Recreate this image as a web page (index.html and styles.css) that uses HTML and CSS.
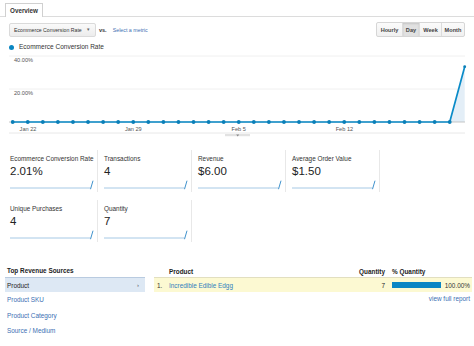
FILE: index.html
```html
<!DOCTYPE html>
<html>
<head>
<meta charset="utf-8">
<link rel="stylesheet" href="styles.css">
</head>
<body>
<div class="page">
  <div class="tabbar"><div class="tab">Overview</div></div>

  <div class="toolbar">
    <div class="select">Ecommerce Conversion Rate<span class="caret">▾</span></div>
    <span class="vs">vs.</span>
    <span class="link metric">Select a metric</span>
    <div class="spacer"></div>
    <div class="btngroup">
      <span class="btn w-hourly">Hourly</span>
      <span class="btn w-day on">Day</span>
      <span class="btn w-week">Week</span>
      <span class="btn w-month">Month</span>
    </div>
  </div>

  <div class="legend"><span class="dot"></span>Ecommerce Conversion Rate</div>

  <svg class="chart" width="474" height="88" viewBox="0 52 474 88">
    <line x1="9" y1="56" x2="465" y2="56" stroke="#ececec" stroke-width="0.8"/>
    <line x1="9" y1="89" x2="465" y2="89" stroke="#ececec" stroke-width="0.8"/>
    <line x1="9" y1="133" x2="465" y2="133" stroke="#e2e2e2" stroke-width="0.8"/>
    <text class="ylab" x="14" y="62.3">40.00%</text>
    <text class="ylab" x="14" y="95.3">20.00%</text>
    <polygon points="449.73,122 464.7,66.7 464.7,122" fill="#e3eef7"/>
    <line x1="9" y1="122" x2="465" y2="122" stroke="#b8b8b8" stroke-width="0.8"/>
    <polyline points="12.7,122 449.73,122 464.7,66.7" fill="none" stroke="#0a8bc8" stroke-width="1.7" stroke-linejoin="round"/>
    <g fill="#0a7fb8">
      <circle cx="12.7" cy="122" r="1.9"/><circle cx="27.77" cy="122" r="1.9"/><circle cx="42.84" cy="122" r="1.9"/>
      <circle cx="57.91" cy="122" r="1.9"/><circle cx="72.98" cy="122" r="1.9"/><circle cx="88.05" cy="122" r="1.9"/>
      <circle cx="103.12" cy="122" r="1.9"/><circle cx="118.19" cy="122" r="1.9"/><circle cx="133.26" cy="122" r="1.9"/>
      <circle cx="148.33" cy="122" r="1.9"/><circle cx="163.4" cy="122" r="1.9"/><circle cx="178.47" cy="122" r="1.9"/>
      <circle cx="193.54" cy="122" r="1.9"/><circle cx="208.61" cy="122" r="1.9"/><circle cx="223.68" cy="122" r="1.9"/>
      <circle cx="238.75" cy="122" r="1.9"/><circle cx="253.82" cy="122" r="1.9"/><circle cx="268.89" cy="122" r="1.9"/>
      <circle cx="283.96" cy="122" r="1.9"/><circle cx="299.03" cy="122" r="1.9"/><circle cx="314.1" cy="122" r="1.9"/>
      <circle cx="329.17" cy="122" r="1.9"/><circle cx="344.24" cy="122" r="1.9"/><circle cx="359.31" cy="122" r="1.9"/>
      <circle cx="374.38" cy="122" r="1.9"/><circle cx="389.45" cy="122" r="1.9"/><circle cx="404.52" cy="122" r="1.9"/>
      <circle cx="419.59" cy="122" r="1.9"/><circle cx="434.66" cy="122" r="1.9"/><circle cx="449.73" cy="122" r="1.9"/>
      <circle cx="464.7" cy="66.7" r="1.4"/>
    </g>
    <text class="xlab" x="28" y="130.5">Jan 22</text>
    <text class="xlab" x="133.3" y="130.5">Jan 29</text>
    <text class="xlab" x="238.7" y="130.5">Feb 5</text>
    <text class="xlab" x="344.4" y="130.5">Feb 12</text>
    <rect x="225" y="134" width="25" height="2.2" fill="#e2e2e2"/>
    <path d="M236.2 134.6 L239.2 134.6 L237.7 136.6 Z" fill="#8a8a8a"/>
  </svg>

  <div class="cards">
    <div class="card">
      <div class="clabel">Ecommerce Conversion Rate</div>
      <div class="cvalue">2.01%</div>
      <svg class="spark" width="84" height="12" viewBox="0 0 84 12"><path d="M0 8 H80.5" stroke="#9cc3e2" stroke-width="0.9" fill="none"/><path d="M80.5 9.2 L83 0.7" stroke="#2b86c6" stroke-width="0.9" fill="none"/></svg>
    </div>
    <div class="card">
      <div class="clabel">Transactions</div>
      <div class="cvalue">4</div>
      <svg class="spark" width="84" height="12" viewBox="0 0 84 12"><path d="M0 8 H80.5" stroke="#9cc3e2" stroke-width="0.9" fill="none"/><path d="M80.5 9.2 L83 0.7" stroke="#2b86c6" stroke-width="0.9" fill="none"/></svg>
    </div>
    <div class="card">
      <div class="clabel">Revenue</div>
      <div class="cvalue">$6.00</div>
      <svg class="spark" width="84" height="12" viewBox="0 0 84 12"><path d="M0 8 H80.5" stroke="#9cc3e2" stroke-width="0.9" fill="none"/><path d="M80.5 9.2 L83 0.7" stroke="#2b86c6" stroke-width="0.9" fill="none"/></svg>
    </div>
    <div class="card">
      <div class="clabel">Average Order Value</div>
      <div class="cvalue">$1.50</div>
      <svg class="spark" width="84" height="12" viewBox="0 0 84 12"><path d="M0 8 H80.5" stroke="#9cc3e2" stroke-width="0.9" fill="none"/><path d="M80.5 9.2 L83 0.7" stroke="#2b86c6" stroke-width="0.9" fill="none"/></svg>
    </div>
    <div class="card">
      <div class="clabel">Unique Purchases</div>
      <div class="cvalue">4</div>
      <svg class="spark" width="84" height="12" viewBox="0 0 84 12"><path d="M0 8 H80.5" stroke="#9cc3e2" stroke-width="0.9" fill="none"/><path d="M80.5 9.2 L83 0.7" stroke="#2b86c6" stroke-width="0.9" fill="none"/></svg>
    </div>
    <div class="card">
      <div class="clabel">Quantity</div>
      <div class="cvalue">7</div>
      <svg class="spark" width="84" height="12" viewBox="0 0 84 12"><path d="M0 8 H80.5" stroke="#9cc3e2" stroke-width="0.9" fill="none"/><path d="M80.5 9.2 L83 0.7" stroke="#2b86c6" stroke-width="0.9" fill="none"/></svg>
    </div>
  </div>

  <div class="bottom">
    <div class="sources">
      <div class="shead">Top Revenue Sources</div>
      <div class="srow active"><span>Product</span><span class="arrow">›</span></div>
      <div class="srow"><span class="link">Product SKU</span></div>
      <div class="srow"><span class="link">Product Category</span></div>
      <div class="srow"><span class="link">Source / Medium</span></div>
    </div>
    <div class="table">
      <div class="trow thead">
        <span></span>
        <span>Product</span>
        <span class="num">Quantity</span>
        <span></span>
        <span class="pqh">% Quantity</span>
      </div>
      <div class="trow tbody">
        <span class="idx">1.</span>
        <span class="plink">Incredible Edible Edgg</span>
        <span class="num">7</span>
        <span></span>
        <span class="bar"><span class="fill"></span></span>
        <span class="pct">100.00%</span>
      </div>
      <div class="full"><span class="link">view full report</span></div>
    </div>
  </div>
</div>
</body>
</html>
```

FILE: styles.css
```css
* { box-sizing: border-box; }
html, body { margin: 0; padding: 0; background: #fff; }
body {
  font-family: "Liberation Sans", Arial, Helvetica, sans-serif;
  color: #222;
  width: 474px;
  height: 346px;
  overflow: hidden;
}
.page { width: 474px; }

.link { color: #3b6fb3; }

/* tabs */
.tabbar {
  height: 17px;
  border-bottom: 1px solid #dcdcdc;
  display: flex;
  align-items: flex-end;
  padding-left: 5px;
}
.tab {
  height: 14px;
  margin-bottom: -1px;
  padding: 0 4px;
  border: 1px solid #d0d0d0;
  border-bottom: none;
  background: #fff;
  font-weight: bold;
  font-size: 6.3px;
  line-height: 13px;
  color: #333;
}

/* toolbar */
.toolbar {
  display: flex;
  align-items: center;
  padding: 5px 9px 0 9px;
  height: 20px;
}
.select {
  width: 87px;
  height: 14px;
  border: 1px solid #dadada;
  border-radius: 2px;
  background: linear-gradient(#fafafa, #ececec);
  font-size: 5.2px;
  line-height: 12px;
  padding-left: 4px;
  color: #333;
  display: flex;
  align-items: center;
}
.caret { margin-left: 5px; font-size: 4.5px; color: #666; }
.vs { margin-left: 3px; font-weight: bold; font-size: 5.5px; color: #333; }
.metric { margin-left: 6px; font-size: 5.3px; }
.spacer { flex: 1; }
.btngroup {
  display: flex;
  height: 15px;
  border: 1px solid #d6d6d6;
  border-radius: 2px;
  background: linear-gradient(#fbfbfb, #f0f0f0);
}
.btn {
  font-size: 5.6px;
  font-weight: bold;
  color: #444;
  display: flex;
  align-items: center;
  justify-content: center;
  border-left: 1px solid #dcdcdc;
}
.btn:first-child { border-left: none; }
.btn.on { background: #e1e1e1; box-shadow: inset 0 1px 2px rgba(0,0,0,0.12); }
.w-hourly { width: 25px; }
.w-day { width: 17px; }
.w-week { width: 22px; }
.w-month { width: 23px; }

/* legend */
.legend {
  margin-top: 5px;
  height: 10px;
  line-height: 10px;
  padding-left: 9px;
  display: flex;
  align-items: center;
  font-size: 6.5px;
  color: #333;
}
.dot {
  width: 5px;
  height: 5px;
  border-radius: 50%;
  background: #0a86c2;
  margin-right: 5px;
}

/* chart */
.chart { display: block; }
.ylab { font-size: 5.6px; fill: #555; font-family: "Liberation Sans", Arial, sans-serif; }
.xlab { font-size: 5.6px; fill: #555; text-anchor: middle; font-family: "Liberation Sans", Arial, sans-serif; }

/* cards */
.cards {
  margin-top: 10px;
  margin-left: 4px;
  display: grid;
  grid-template-columns: repeat(4, 94px);
  row-gap: 8px;
}
.card {
  height: 42px;
  padding: 5px 0 0 6px;
  border-right: 1px solid #e8e8e8;
}
.clabel { font-size: 6.4px; line-height: 8px; color: #333; white-space: nowrap; }
.cvalue { margin-top: 2px; font-size: 11.5px; line-height: 13px; color: #222; }
.spark { display: block; margin-top: 2px; }

/* bottom */
.bottom {
  margin-top: 23px;
  padding-left: 5px;
  display: flex;
  gap: 9px;
  font-size: 6.4px;
}
.sources { width: 140px; }
.shead {
  height: 12px;
  line-height: 12px;
  padding-left: 2px;
  font-weight: bold;
  color: #222;
}
.srow {
  height: 15.6px;
  display: flex;
  align-items: center;
  justify-content: space-between;
  padding: 0 6px 0 2px;
}
.srow.active {
  height: 15px;
  background: #dde8f4;
  border-top: 1px solid #b9cbe0;
  color: #222;
}
.arrow { font-size: 6px; color: #555; }

.table { width: 318px; }
.trow {
  display: grid;
  grid-template-columns: 15px 1fr 32px 7px 49px 31px;
  align-items: center;
}
.thead { height: 12px; font-weight: bold; color: #222; }
.thead .pqh { grid-column: 5 / 7; }
.tbody {
  height: 15px;
  background: #fcf9d2;
  border-top: 1px solid #e2dfc0;
}
.idx { padding-left: 3px; color: #333; }
.plink { color: #2f80bd; }
.num { text-align: right; }
.bar { display: block; height: 6.5px; }
.fill { display: block; width: 100%; height: 100%; background: #0a86c4; }
.pct { text-align: right; padding-right: 2px; color: #333; }
.full { text-align: right; padding-right: 2px; height: 14px; line-height: 14px; }
```
